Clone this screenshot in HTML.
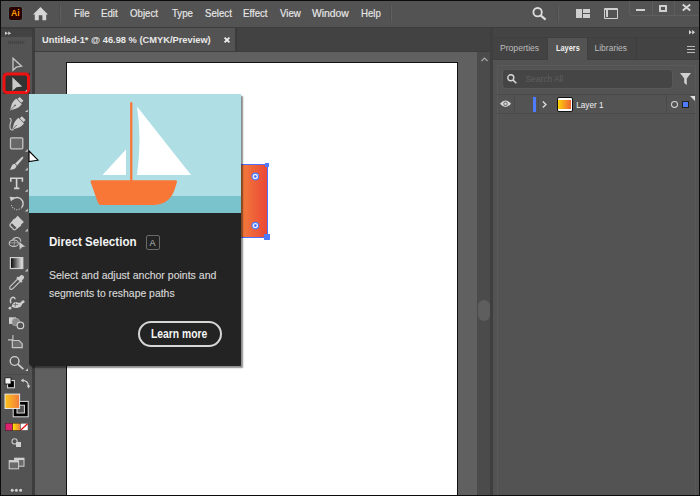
<!DOCTYPE html>
<html><head><meta charset="utf-8">
<style>
*{margin:0;padding:0;box-sizing:border-box}
html,body{width:700px;height:496px;overflow:hidden;background:#0c0c0c}
body{position:relative;font-family:"Liberation Sans",sans-serif}
.a{position:absolute}
.t{position:absolute;white-space:nowrap;line-height:1;transform-origin:0 0}
svg{position:absolute;overflow:visible}
</style></head><body>

<!-- menu bar -->
<div class="a" style="left:1px;top:1px;width:698px;height:26px;background:#535353"></div>
<div class="a" style="left:1px;top:27px;width:698px;height:1px;background:#3c3c3c"></div>

<!-- Ai logo -->
<div class="a" style="left:8.5px;top:7px;width:13.5px;height:13px;background:#2a0000;border-radius:2px;box-shadow:0 0 0 0.7px #4f6262"></div>
<div class="t" style="left:11px;top:9.2px;font-size:8.6px;font-weight:700;color:#ff9a00">Ai</div>

<!-- home -->
<svg style="left:33px;top:7px" width="15" height="14" viewBox="0 0 15 14"><path d="M7.5 0 L15 7.6 L13.2 7.6 L13.2 13.2 L9.4 13.2 L9.4 8.2 L5.8 8.2 L5.8 13.2 L1.8 13.2 L1.8 7.6 L0 7.6 Z" fill="#d6d6d6"/></svg>
<div class="a" style="left:59.400000000000006px;top:5px;width:0.8px;height:17px;background:#4c4c4c"></div><div class="a" style="left:60.2px;top:5px;width:1.1px;height:16.5px;background:#5f5f5f;border-radius:0.5px"></div>

<!-- menu items -->
<div id="menu">
<div class="t m" style="left:74px">File</div>
<div class="t m" style="left:101px">Edit</div>
<div class="t m" style="left:130px">Object</div>
<div class="t m" style="left:172px">Type</div>
<div class="t m" style="left:205px">Select</div>
<div class="t m" style="left:243px">Effect</div>
<div class="t m" style="left:280px">View</div>
<div class="t m" style="left:312px;transform:scaleX(0.9)">Window</div>
<div class="t m" style="left:361px">Help</div>
</div>
<style>.m{top:8px;font-size:11.5px;color:#e6e6e6;-webkit-text-stroke:0.2px #e6e6e6;transform:scaleX(0.84)}</style>
<div class="a" style="left:390.2px;top:5px;width:0.8px;height:17px;background:#4c4c4c"></div><div class="a" style="left:391px;top:5px;width:1.1px;height:16.5px;background:#5f5f5f;border-radius:0.5px"></div>

<!-- search -->
<svg style="left:532px;top:7px" width="16" height="14" viewBox="0 0 16 14"><circle cx="5.6" cy="5.2" r="4.2" fill="none" stroke="#dcdcdc" stroke-width="1.9"/><path d="M8.6 8.4 L13.6 12.6" stroke="#dcdcdc" stroke-width="2.2"/></svg>
<div class="a" style="left:557.2px;top:5px;width:0.8px;height:17px;background:#4c4c4c"></div><div class="a" style="left:558px;top:5px;width:1.1px;height:16.5px;background:#5f5f5f;border-radius:0.5px"></div>
<!-- workspace icons -->
<div class="a" style="left:575.5px;top:9px;width:6.5px;height:9.3px;background:#cfcfcf"></div>
<div class="a" style="left:583px;top:9px;width:6.8px;height:4px;background:#cfcfcf"></div>
<div class="a" style="left:583px;top:14px;width:6.8px;height:4.3px;background:#cfcfcf"></div>
<div class="a" style="left:604px;top:8px;width:14px;height:11px;border:1.5px solid #d0d0d0;border-top-width:2px;border-radius:1px"></div>
<div class="a" style="left:606px;top:10px;width:2px;height:7px;background:#d0d0d0"></div>

<!-- window controls -->
<div class="a" style="left:629px;top:1px;width:69px;height:15px;border:1px solid #5e5e5e;border-top:none;border-right:none;border-bottom-left-radius:4px"></div>
<div class="a" style="left:652px;top:1px;width:1px;height:14px;background:#5e5e5e"></div>
<div class="a" style="left:674px;top:1px;width:1px;height:14px;background:#5e5e5e"></div>
<div class="a" style="left:636px;top:9px;width:9px;height:2px;background:#d0d0d0"></div>
<div class="a" style="left:659.2px;top:5px;width:8.2px;height:7px;border:2px solid #d0d0d0;border-radius:0.5px"></div>
<svg style="left:682px;top:4px" width="9" height="7" viewBox="0 0 9 7"><path d="M0.8 0.4 L8.2 6.6 M8.2 0.4 L0.8 6.6" stroke="#d8d8d8" stroke-width="1.9"/></svg>

<!-- left toolbar -->
<div class="a" style="left:1px;top:28px;width:31.5px;height:9.3px;background:#434343;border-top:1px solid #3c3c3c"></div>
<div class="a" style="left:1px;top:37.3px;width:31.5px;height:458px;background:#535353"></div>
<div class="a" style="left:32.4px;top:28px;width:2.6px;height:467px;background:#3d3d3d"></div>


<!-- toolbar icons -->
<div class="a" style="left:3px;top:73px;width:27px;height:21px;background:#333;"></div>
<svg style="left:0;top:0" width="34" height="496" viewBox="0 0 34 496">
  <g fill="#d0d0d0">
    <path d="M5 31.4 L8 33.2 L5 35 Z M8.2 31.4 L11.2 33.2 L8.2 35 Z"/>
  </g>
  <rect x="7.8" y="40.8" width="16.6" height="3.2" fill="url(#grip)"/>
  <!-- selection outline -->
  <path d="M13 58.3 L21.5 66.2 L16.3 67.2 L13 70.3 Z" fill="none" stroke="#c6c6c6" stroke-width="1.3" stroke-linejoin="miter"/>
  <!-- red box -->
  <rect x="4" y="74" width="24.5" height="18.6" rx="3" fill="none" stroke="#ee1111" stroke-width="3"/>
  <path d="M12.4 77.3 L22.2 86.6 L16.5 87.2 L12.4 91 Z" fill="#c8c8c8"/>
  <path d="M27 89.6 L27 91.6 L25 91.6 Z" fill="#c8c8c8"/>
  <!-- small corner triangles -->
  <g fill="#c8c8c8">
    <path d="M27.8 109.4 L27.8 112 L25 112 Z"/>
    <path d="M27.8 149 L27.8 151.8 L25 151.8 Z"/>
    <path d="M27.8 167.6 L27.8 170.4 L25 170.4 Z"/>
    <path d="M27.8 189 L27.8 191.8 L25 191.8 Z"/>
    <path d="M27.8 208.6 L27.8 211.4 L25 211.4 Z"/>
    <path d="M27.8 228.6 L27.8 231.4 L25 231.4 Z"/>
    <path d="M27.8 268.6 L27.8 271.4 L25 271.4 Z"/>
    <path d="M28 368.3 L28 371 L25.2 371 Z"/>
  </g>
  <!-- pen -->
  <g transform="translate(16.2,104.2) rotate(45) scale(0.95)">
    <rect x="-2.8" y="-8" width="5.6" height="3.2" fill="#cfcfcf"/>
    <path d="M-4.2 -4.2 L4.2 -4.2 Q4.6 0 3.6 2.6 L0 9.4 L-3.6 2.6 Q-4.6 0 -4.2 -4.2 Z" fill="#cfcfcf"/>
    <path d="M0 2.4 L0 9.4" stroke="#535353" stroke-width="0.8"/>
    <circle cx="0" cy="1.8" r="0.9" fill="#535353"/>
  </g>
  <!-- curvature pen -->
  <g transform="translate(18.4,123.4) rotate(45) scale(0.95)">
    <rect x="-2.8" y="-8" width="5.6" height="3.2" fill="#cfcfcf"/>
    <path d="M-4.2 -4.2 L4.2 -4.2 Q4.6 0 3.6 2.6 L0 9.4 L-3.6 2.6 Q-4.6 0 -4.2 -4.2 Z" fill="#cfcfcf"/>
    <path d="M0 2.4 L0 9.4" stroke="#535353" stroke-width="0.8"/>
  </g>
  <path d="M9.6 118.4 Q12 119 10.8 122 Q9.2 127 10.6 129.4 Q11.8 130.6 13.6 129.6" fill="none" stroke="#c8c8c8" stroke-width="1.1"/>
  <!-- rectangle -->
  <rect x="10.5" y="137.8" width="12.3" height="11" rx="1" fill="#686868" stroke="#c4c4c4" stroke-width="1.3"/>
  <!-- brush -->
  <path d="M23 156.8 Q23.8 157.6 23 158.6 L17.2 165.4 L15.2 163.4 L21.6 157.2 Q22.4 156.4 23 156.8 Z" fill="#cfcfcf"/>
  <path d="M14.6 163.8 L16.6 165.8 Q16 168.8 12.6 169.4 L9.6 169.8 Q11 168 11.4 166.4 Q12.2 164 14.6 163.8 Z" fill="#cfcfcf"/>
  <!-- type -->
  <path d="M10.8 181.8 L10.8 178.2 L22.4 178.2 L22.4 181.8 M16.6 178.2 L16.6 188.4 M14 188.4 L19.4 188.4" fill="none" stroke="#d4d4d4" stroke-width="1.6"/>
  <!-- rotate -->
  <path d="M12.4 199.6 A5.8 5.8 0 1 1 21.6 207.6" fill="none" stroke="#cfcfcf" stroke-width="1.4"/>
  <path d="M21.6 207.6 A5.8 5.8 0 0 1 11.4 205" fill="none" stroke="#bdbdbd" stroke-width="1.1" stroke-dasharray="1.2 1.2"/>
  <path d="M9.6 196.8 L14.6 197.2 L11 201.4 Z" fill="#cfcfcf"/>
  <!-- eraser -->
  <path d="M17.7 215.8 L23.8 222 L17.2 228.4 L11.2 222.4 Z" fill="#cfcfcf"/>
  <path d="M14.2 219.4 L20.4 225.4 L15.2 229.6 Q14.5 230.2 13.8 229.6 L10.2 226 Q9.6 225.2 10.2 224.4 Z" fill="none" stroke="#cfcfcf" stroke-width="1.2"/>
  <!-- shape builder -->
  <ellipse cx="13.8" cy="243.2" rx="4.6" ry="3.2" fill="none" stroke="#c8c8c8" stroke-width="1.1"/>
  <path d="M12.6 240.4 A4.2 4.2 0 0 1 20.8 241.6" fill="none" stroke="#c8c8c8" stroke-width="1.1"/>
  <path d="M10 242.8 L18.6 242.8 M14.6 240 L14 246" stroke="#a8a8a8" stroke-width="0.8"/>
  <path d="M18.8 241.2 L25.6 246.8 L22.2 247.2 L19.6 250.2 Z" fill="#d0d0d0" stroke="#535353" stroke-width="0.5"/>
  <!-- gradient -->
  <defs><pattern id="grip" width="2" height="4" patternUnits="userSpaceOnUse"><rect width="1.4" height="4" fill="#444444"/><rect x="1.4" width="0.6" height="4" fill="#4a4a4a"/></pattern><linearGradient id="gr" x1="0" x2="1"><stop offset="0" stop-color="#000"/><stop offset="1" stop-color="#eee"/></linearGradient>
  <linearGradient id="fillg" x1="0" x2="1"><stop offset="0" stop-color="#ffc51c"/><stop offset="1" stop-color="#f07a3c"/></linearGradient>
  <linearGradient id="fillg2" x1="0" x2="1"><stop offset="0" stop-color="#ffe400"/><stop offset="1" stop-color="#f07a3c"/></linearGradient></defs>
  <rect x="10.4" y="257.6" width="12.4" height="10.9" fill="url(#gr)" stroke="#d0d0d0" stroke-width="1.2"/>
  <!-- eyedropper -->
  <g transform="translate(16.3,282.8) rotate(45)">
    <rect x="-2.3" y="-10" width="4.6" height="5.6" rx="2.2" fill="#cfcfcf"/>
    <rect x="-3.4" y="-5.6" width="6.8" height="2.2" rx="0.6" fill="#cfcfcf"/>
    <path d="M-1.7 -3.4 L-1.7 7.2 Q0 10.4 1.7 7.2 L1.7 -3.4" fill="none" stroke="#cfcfcf" stroke-width="1.1"/>
  </g>
  <!-- puppet warp -->
  <path d="M10.8 303.2 Q9.6 298.6 12.4 297.4 Q14.8 296.8 15 299.2" fill="none" stroke="#cfcfcf" stroke-width="1.5"/>
  <path d="M11.4 306.6 Q13.6 301 17.6 302.4 Q20.4 303.4 21.6 301.2 Q22.8 299.6 24.4 301 Q25.4 302.6 23.6 303 Q22.4 303.2 22 304.6 Q21 307.8 16.6 308 Q13.4 308.2 11.4 306.6 Z" fill="#cfcfcf"/>
  <circle cx="10" cy="308.2" r="1.4" fill="#cfcfcf"/>
  <path d="M13.4 304.6 L18.2 304.6 M15.6 302.6 L15.2 306.8" stroke="#6a6a6a" stroke-width="0.8"/>
  <!-- blend -->
  <rect x="9" y="317.3" width="7" height="6.6" fill="#cfcfcf"/>
  <circle cx="15.8" cy="322" r="3.8" fill="#8a8a8a" stroke="#a8a8a8" stroke-width="0.8"/>
  <circle cx="20.4" cy="325.4" r="3.3" fill="#535353" stroke="#cfcfcf" stroke-width="1.2"/>
  <!-- artboard -->
  <path d="M8 339.9 L13.2 339.9 M12.9 335 L12.9 340.2" stroke="#c8c8c8" stroke-width="1.1"/>
  <path d="M12.3 340.5 L19 340.5 L22.2 343.7 L22.2 347.6 L12.3 347.6 Z" fill="#6e6e6e" stroke="#c8c8c8" stroke-width="1.2"/>
  <!-- zoom -->
  <circle cx="14.6" cy="361" r="4.4" fill="none" stroke="#cfcfcf" stroke-width="1.4"/>
  <path d="M17.8 364.2 L23.4 369.2" stroke="#cfcfcf" stroke-width="1.7"/>
  <!-- separator -->
  <rect x="4" y="374" width="25" height="1" fill="#4a4a4a"/>
  <!-- default fill stroke -->
  <rect x="7.6" y="380.6" width="6.8" height="7.2" fill="#000" stroke="#e6e6e6" stroke-width="1"/>
  <rect x="5" y="377.8" width="6" height="6.2" fill="#f4f4f4" stroke="#111" stroke-width="0.8"/>
  <!-- swap -->
  <path d="M22 380.4 Q27.6 380 28.6 386" fill="none" stroke="#cfcfcf" stroke-width="1.3"/>
  <path d="M20.8 380.4 L23.6 378.6 L23.6 382.4 Z M28.6 388.4 L26.6 385.6 L30.4 385.6 Z" fill="#cfcfcf"/>
  <!-- stroke swatch -->
  <rect x="13.2" y="401.4" width="15" height="15.4" fill="#000" stroke="#dcdcdc" stroke-width="1"/>
  <rect x="17" y="405.2" width="7.4" height="7.8" fill="#535353" stroke="#dcdcdc" stroke-width="1"/>
  <!-- fill swatch -->
  <rect x="5" y="394.1" width="14.6" height="14.4" fill="url(#fillg)" stroke="#e6e6e6" stroke-width="1"/>
  <!-- color buttons -->
  <rect x="5.2" y="423" width="22.8" height="7.8" fill="#222"/>
  <rect x="5.6" y="423.5" width="6.8" height="6.8" fill="#e0226e"/>
  <rect x="12.9" y="423.5" width="7.2" height="6.8" fill="url(#fillg2)"/>
  <rect x="20.6" y="423.5" width="7.2" height="6.8" fill="#fff"/>
  <path d="M20.8 430 L27.6 423.8" stroke="#e81010" stroke-width="1.3"/>
  <!-- drawing mode -->
  <circle cx="14.6" cy="441.4" r="2.6" fill="none" stroke="#c8c8c8" stroke-width="1.1"/>
  <rect x="16" y="442" width="5" height="5" fill="#cfcfcf"/>
  <!-- screen mode -->
  <rect x="14.6" y="458.2" width="9.4" height="8" fill="#6a6a6a" stroke="#cfcfcf" stroke-width="1"/>
  <rect x="14.6" y="458" width="9.4" height="2" fill="#cfcfcf"/>
  <rect x="9.2" y="460.6" width="9.4" height="8.2" fill="#6a6a6a" stroke="#cfcfcf" stroke-width="1"/>
  <rect x="9.2" y="460.4" width="9.4" height="2" fill="#cfcfcf"/>
  <!-- dots -->
  <circle cx="12.2" cy="490.3" r="1.5" fill="#d0d0d0"/>
  <circle cx="16.4" cy="490.3" r="1.5" fill="#d0d0d0"/>
  <circle cx="20.6" cy="490.3" r="1.5" fill="#d0d0d0"/>
</svg>

<!-- doc tab bar -->
<div class="a" style="left:34.5px;top:28px;width:455.5px;height:24.3px;background:#424242"></div>
<div class="a" style="left:35px;top:28px;width:200px;height:23px;background:#535353"></div>
<div class="a" style="left:235.3px;top:28px;width:1.6px;height:23px;background:#3b3b3b"></div>
<div class="a" style="left:34.5px;top:51px;width:455.5px;height:1.3px;background:#3d3d3d"></div>
<div class="t" style="left:42px;top:35.7px;font-size:9.3px;font-weight:700;color:#e8e8e8">Untitled-1* @ 46.98 % (CMYK/Preview)</div>
<svg style="left:224px;top:37px" width="6" height="6" viewBox="0 0 6 6"><path d="M0.6 0.6 L5.4 5.4 M5.4 0.6 L0.6 5.4" stroke="#f0f0f0" stroke-width="1.8"/></svg>

<!-- canvas -->
<div class="a" style="left:35px;top:52.3px;width:442px;height:443px;background:#606060"></div>
<div class="a" style="left:66px;top:62px;width:392px;height:433px;background:#fff;border:1px solid #111;border-bottom:none"></div>
<!-- scrollbar -->
<div class="a" style="left:477px;top:52px;width:13px;height:443px;background:#4b4b4b"></div>
<svg style="left:480.5px;top:57px" width="7" height="5" viewBox="0 0 7 5"><path d="M0.5 4 L3.5 1 L6.5 4" fill="none" stroke="#a8a8a8" stroke-width="1.2"/></svg>
<div class="a" style="left:478px;top:300px;width:12px;height:21px;background:#5e5e5e;border-radius:6px"></div>
<div class="a" style="left:490px;top:28px;width:3px;height:467px;background:#3f3f3f"></div>

<!-- right panel -->
<div class="a" style="left:493px;top:28px;width:206px;height:10px;background:#444444"></div>
<svg style="left:689px;top:30.4px" width="6" height="4.4" viewBox="0 0 6 4.4"><path d="M0 0 L2.8 2.2 L0 4.4Z M3.2 0 L6 2.2 L3.2 4.4Z" fill="#d8d8d8"/></svg>
<div class="a" style="left:493px;top:38px;width:206px;height:22px;background:#434343"></div>
<div class="a" style="left:548px;top:38px;width:39px;height:22px;background:#535353"></div>
<div class="a" style="left:493px;top:37px;width:206px;height:1px;background:#3f3f3f"></div>
<div class="a" style="left:493px;top:59px;width:55px;height:1px;background:#3f3f3f"></div>
<div class="a" style="left:587px;top:59px;width:112px;height:1px;background:#3f3f3f"></div>
<div class="a" style="left:547px;top:38px;width:1px;height:22px;background:#3f3f3f"></div>
<div class="a" style="left:587px;top:38px;width:1px;height:22px;background:#3f3f3f"></div>
<div class="a" style="left:636px;top:38px;width:1px;height:22px;background:#3d3d3d"></div>
<div class="t" style="left:500px;top:44.2px;font-size:8.6px;color:#bdbdbd">Properties</div>
<div class="t" style="left:555.5px;top:43px;font-size:9.6px;font-weight:700;color:#f0f0f0;transform:scaleX(0.77)">Layers</div>
<div class="t" style="left:594.5px;top:44.2px;font-size:8.5px;color:#bdbdbd">Libraries</div>
<div class="a" style="left:687px;top:46px;width:8.3px;height:1.3px;background:#bcbcbc"></div>
<div class="a" style="left:687px;top:49px;width:8.3px;height:1.3px;background:#bcbcbc"></div>
<div class="a" style="left:687px;top:52px;width:8.3px;height:1.3px;background:#bcbcbc"></div>

<div class="a" style="left:493px;top:60px;width:206px;height:435px;background:#535353"></div>
<div class="a" style="left:497px;top:65px;width:199px;height:430px;border:1px solid #5a5a5a;border-bottom:none"></div>
<div class="a" style="left:503px;top:69.5px;width:168.5px;height:18.5px;background:#454545;border-radius:3px;box-shadow:0 0 0 1px #585858"></div>
<svg style="left:507px;top:73.5px" width="10" height="10" viewBox="0 0 10 10"><circle cx="3.8" cy="3.8" r="3" fill="none" stroke="#d8d8d8" stroke-width="1.4"/><path d="M6 6 L9.3 9.3" stroke="#d8d8d8" stroke-width="1.6"/></svg>
<div class="t" style="left:525.5px;top:75px;font-size:8.4px;color:#5f5f5f">Search All</div>
<svg style="left:680px;top:73px" width="11" height="12" viewBox="0 0 11 12"><path d="M0 0 L11 0 L6.8 5.5 L6.8 12 L4.2 10 L4.2 5.5 Z" fill="#d0d0d0"/></svg>

<!-- layer row -->
<div class="a" style="left:497px;top:94px;width:199px;height:1px;background:#4a4a4a"></div>
<div class="a" style="left:497px;top:113px;width:199px;height:1px;background:#4a4a4a"></div>
<div class="a" style="left:514px;top:95px;width:1px;height:18px;background:#4a4a4a"></div>
<div class="a" style="left:538px;top:95px;width:1px;height:18px;background:#4a4a4a"></div>
<div class="a" style="left:666px;top:95px;width:1px;height:18px;background:#4a4a4a"></div>
<svg style="left:500px;top:100px" width="11" height="8" viewBox="0 0 11 8"><path d="M0 3.8 Q5.5 -2.6 11 3.8 Q5.5 10.2 0 3.8 Z" fill="#dadada"/><circle cx="5.5" cy="3.8" r="2.2" fill="#6a6a6a"/><circle cx="5.5" cy="3.8" r="1.2" fill="#dadada"/></svg>
<div class="a" style="left:533px;top:97px;width:3px;height:15px;background:#4f7bff"></div>
<svg style="left:542px;top:100.6px" width="5" height="7" viewBox="0 0 5 7"><path d="M0.8 0.5 L4 3.5 L0.8 6.5" fill="none" stroke="#e0e0e0" stroke-width="1.3"/></svg>
<div class="a" style="left:557px;top:97px;width:15.6px;height:14.7px;background:#fff;border:1.2px solid #111;border-radius:2px"></div>
<div class="a" style="left:558.2px;top:99.6px;width:13.2px;height:9.2px;background:linear-gradient(90deg,#ffd400,#f5a020 45%,#f06432)"></div>
<div class="t" style="left:576.2px;top:101.8px;font-size:8.2px;color:#f0f0f0">Layer 1</div>
<div class="a" style="left:670.5px;top:101px;width:7.5px;height:7.3px;border:1.3px solid #d4d4d4;border-radius:50%"></div>
<div class="a" style="left:682px;top:101px;width:7px;height:7px;background:#4f7bff;border:1px solid #222"></div>
<svg style="left:690px;top:96px" width="5" height="5" viewBox="0 0 5 5"><path d="M0 0 L5 0 L5 5 Z" fill="#e0e0e0"/></svg>

<!-- orange rect on artboard -->
<div class="a" style="left:225px;top:164px;width:43px;height:74px;background:linear-gradient(90deg,#f7963e 0%,#f27c3c 38%,#eb4736 100%);border:1px solid #4f6fff"></div>
<div class="a" style="left:265px;top:163px;width:4px;height:4px;background:#4f7bff"></div>
<div class="a" style="left:264px;top:234px;width:6px;height:6px;background:#4f7bff"></div>
<svg style="left:248px;top:169px" width="15" height="64" viewBox="0 0 15 64">
<circle cx="7.3" cy="7.5" r="3.3" fill="#e8eeff" stroke="#4a7bff" stroke-width="1.2"/><circle cx="7.3" cy="7.5" r="1.3" fill="#3f6cff"/>
<circle cx="7.3" cy="56.6" r="3.3" fill="#e8eeff" stroke="#4a7bff" stroke-width="1.2"/><circle cx="7.3" cy="56.6" r="1.3" fill="#3f6cff"/>
</svg>


<!-- tooltip -->
<div class="a" style="left:29px;top:94px;width:212px;height:272px;background:#232323;border-radius:0 0 1px 3px;box-shadow:2px 2px 1.5px rgba(0,0,0,.45);overflow:hidden">
  <div class="a" style="left:0;top:0;width:212px;height:102px;background:#afdfe5"></div>
  <div class="a" style="left:0;top:102px;width:212px;height:17px;background:#7bc3cc"></div>
  <svg style="left:0;top:0" width="212" height="119" viewBox="0 0 212 119">
    <path d="M108 12.6 Q113 45 108 81 L162 81 Z" fill="#fff"/>
    <path d="M97 55.4 L73.5 81 L97 81 Z" fill="#fff"/>
    <rect x="101.1" y="8.3" width="2.3" height="79" fill="#f87737"/>
    <path d="M63 86.3 Q61 86.3 61.6 88 L69 109 Q70 111 72 111 L124 111 Q140 111 145.5 96 L148 88 Q148.5 86.3 146.5 86.3 Z" fill="#f87737"/>
  </svg>
  <div class="t" style="left:20px;top:142px;font-size:12px;font-weight:700;color:#f4f4f4;transform:scaleX(0.965)">Direct Selection</div>
  <div class="a" style="left:117px;top:141px;width:13.5px;height:15px;border:1px solid #6a6a6a;border-radius:2px"></div>
  <div class="t" style="left:120.5px;top:144.5px;font-size:9px;color:#bdbdbd">A</div>
  <div class="t" style="left:20px;top:175.6px;font-size:11.4px;color:#d8d8d8;-webkit-text-stroke:0.15px #d8d8d8;transform:scaleX(0.924)">Select and adjust anchor points and</div>
  <div class="t" style="left:20px;top:193.6px;font-size:11.4px;color:#d8d8d8;-webkit-text-stroke:0.15px #d8d8d8;transform:scaleX(0.914)">segments to reshape paths</div>
  <div class="a" style="left:109px;top:227px;width:84px;height:26px;border:2px solid #d6d6d6;border-radius:13px"></div>
  <div class="t" style="left:122px;top:233.5px;font-size:12px;font-weight:700;color:#f4f4f4;transform:scaleX(0.86)">Learn more</div>
</div>

<!-- cursor -->
<svg style="left:29px;top:150px" width="10" height="13" viewBox="0 0 10 13"><path d="M0 1 L9 10.2 L0 11.5 Z" fill="#fff" stroke="#000" stroke-width="1.1"/></svg>

</body></html>
